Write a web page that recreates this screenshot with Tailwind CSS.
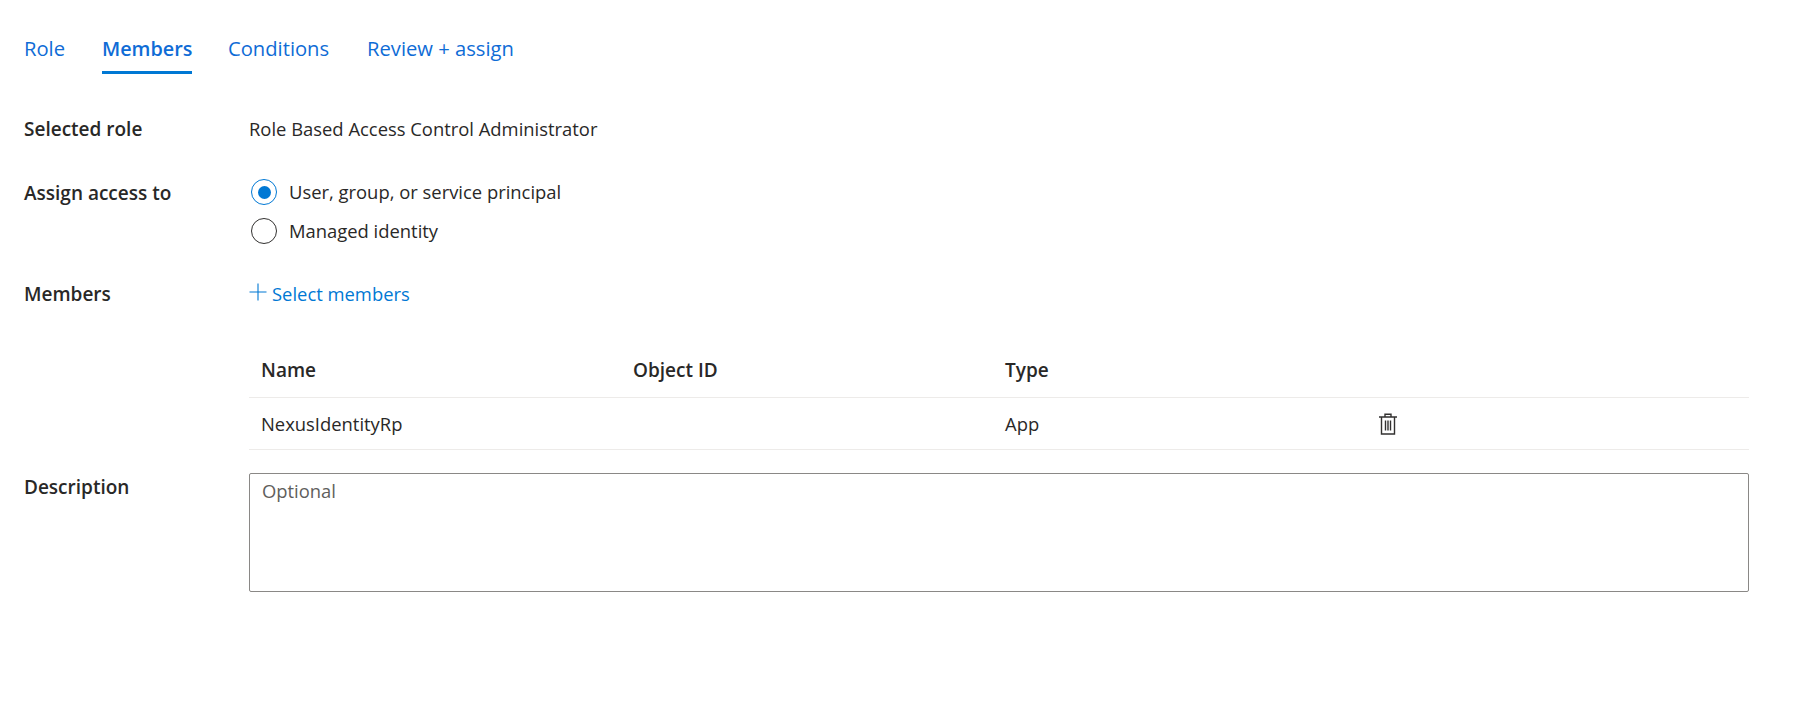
<!DOCTYPE html>
<html lang="en">
<head>
  <meta charset="UTF-8" />
  <title>Add role assignment</title>
  <script src="https://cdn.jsdelivr.net/npm/@tailwindcss/browser@4"></script>
</head>
<body class="bg-white text-[#292827] text-[18.4px] font-['Open_Sans',sans-serif] h-[722px] overflow-hidden">
  <nav class="flex pl-6 h-[74px] pt-[33px] text-[#0f6cd6] text-[20.2px] leading-[30px]">
    <a class="w-[78px]">Role</a>
    <a class="w-[90px] h-[41px] mr-9 pt-[1px] border-b-[3px] border-[#0078d4] font-semibold text-[19.8px] whitespace-nowrap">Members</a>
    <a class="w-[139px]">Conditions</a>
    <a>Review + assign</a>
  </nav>

  <div class="pl-6 pr-[60px]">
    <div class="flex mt-[43px] h-6 items-center">
      <div class="w-[225px] font-semibold text-[19px]">Selected role</div>
      <div>Role Based Access Control Administrator</div>
    </div>

    <div class="flex mt-[38px]">
      <div class="w-[225px] pt-[1px] font-semibold text-[19px] leading-[26px]">Assign access to</div>
      <div class="flex flex-col gap-[13px] ml-[2px]">
        <label class="flex items-center gap-[12px] h-[26px]">
          <span class="w-[26px] h-[26px] rounded-full border border-[#0078d4] flex items-center justify-center"><span class="w-[13px] h-[13px] rounded-full bg-[#0078d4]"></span></span>
          User, group, or service principal
        </label>
        <label class="flex items-center gap-[12px] h-[26px]">
          <span class="w-[26px] h-[26px] rounded-full border border-[#323130]"></span>
          Managed identity
        </label>
      </div>
    </div>

    <div class="flex mt-[38px] h-6 items-center">
      <div class="w-[225px] font-semibold text-[19px]">Members</div>
      <a class="flex items-center gap-[5px] text-[#0078d4]">
        <svg width="18" height="18" viewBox="0 0 18 18" fill="none" stroke="#0078d4" stroke-width="1.1" class="-mt-[4px]"><path d="M9 0.5v17M0.5 9h17"/></svg>
        Select members
      </a>
    </div>

    <div class="ml-[225px] mt-[50px]">
      <div class="grid grid-cols-[372px_372px_372px_1fr] pl-[12px] h-[42px] items-center border-b border-[#edebe9] font-semibold text-[19px] pb-[12px]">
        <div>Name</div>
        <div>Object ID</div>
        <div>Type</div>
      </div>
      <div class="grid grid-cols-[372px_372px_372px_1fr] pl-[12px] h-[52px] items-center border-b border-[#edebe9]">
        <div>NexusIdentityRp</div>
        <div></div>
        <div>App</div>
        <svg width="18" height="22" viewBox="0 0 18 22" fill="none" stroke="#323130" stroke-width="1.4" class="ml-[2px]">
          <path d="M0 4h18M6 4V1.2h6V4M2.5 4v17h13V4"/>
          <path d="M6.5 7.5v10M9 7.5v10M11.5 7.5v10"/>
        </svg>
      </div>
    </div>

    <div class="flex mt-[23px]">
      <div class="w-[225px] font-semibold text-[19px]">Description</div>
      <textarea placeholder="Optional" class="flex-1 h-[119px] border border-[#8a8886] rounded-[2px] px-[12px] py-[3px] resize-none outline-none placeholder:text-[#605e5c]"></textarea>
    </div>
  </div>
</body>
</html>
